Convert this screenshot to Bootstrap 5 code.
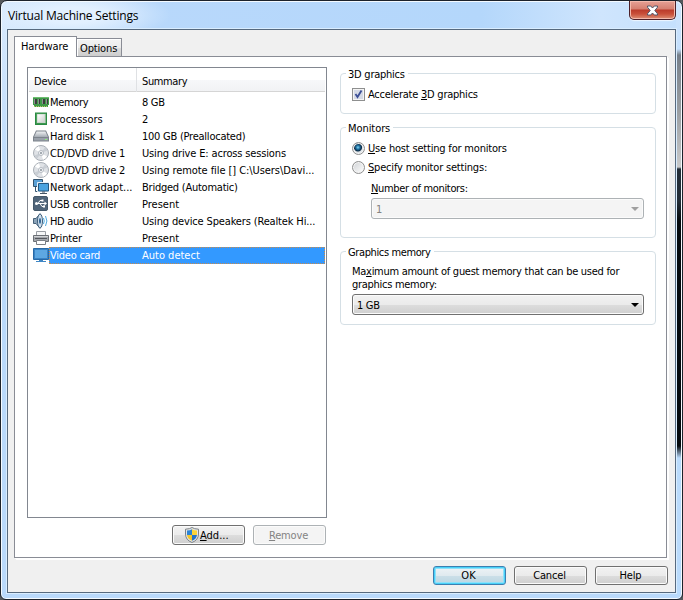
<!DOCTYPE html>
<html lang="en">
<head>
<meta charset="utf-8">
<title>Virtual Machine Settings</title>
<link href="https://cdn.jsdelivr.net/npm/bootstrap@5.3.0/dist/css/bootstrap.min.css" rel="stylesheet">
<style>
body{width:683px;height:600px;overflow:hidden;background:#55585c;font:11px/13px "DejaVu Sans Condensed","DejaVu Sans",sans-serif;font-stretch:condensed;color:#000}
u{text-underline-offset:1px;text-decoration-thickness:1px}
/* tracking steps */
.k1{letter-spacing:-.07px}.k2{letter-spacing:-.15px}.k3{letter-spacing:-.24px}.k4{letter-spacing:-.32px}.k5{letter-spacing:-.38px}
.k25{letter-spacing:-.19px}.k35{letter-spacing:-.28px}
.win{width:683px;height:600px;border:1px solid #1c222b;border-radius:7px 7px 6px 6px;box-shadow:inset 0 0 0 1px #f4faff;padding:0 6px 6px 6px;
background:linear-gradient(#cfe5fd 0,#c4dffc 48px,#77808a 54px,#9a9ea2 110px,#c8c9ca 166px,#232d37 168px,#232d37 200px,#05090d 220px,#05090d 445px,#b9dafb 457px) right 1px top 0/5px 100% no-repeat,
radial-gradient(ellipse 100px 26px at 70px 14px,#e2f0ff 30%,transparent) 0 0/200px 29px no-repeat,
linear-gradient(90deg,#d5e8fd,#b8d8fb 150px,#b4d7fb 480px,#cfe5fd 600px,#c4e0fd) 0 0/100% 29px no-repeat,
linear-gradient(#d9eafd,#b9d9fb 200px)}
.titlebar{height:28px;font:12px/16px "Open Sans","Noto Sans",sans-serif;font-stretch:normal;padding:7px 0 0 1px}
.closebtn{width:47px;height:19px;margin-top:-7px;border:1px solid #4c2029;border-top:0;border-radius:0 0 5px 5px;box-shadow:inset 0 0 0 1px #f3b9ac,0 1px 1px #eef7ff;background:linear-gradient(#e6a196,#d57f70 8px,#bb3b2b 9px,#c9503a 13px,#dd9075)}
.client{height:564px;border:1px solid #56697e;background:#f0f0f0;padding:6px 6px 0 6px;box-shadow:0 0 0 1px #d9edff}
.tabs{height:20px}
.tab1{width:63px;height:21px;border:1px solid #898c95;border-bottom:0;background:#fff;padding:3px 0 0 6px;z-index:1}
.tab2{width:45px;height:18px;border:1px solid #898c95;border-left:0;border-bottom:0;background:linear-gradient(#f3f3f3,#ebebeb 50%,#ddd 51%,#cdcdcd);padding:3px 0 0 3px;box-shadow:inset 1px 1px #fff}
.pane{width:653px;height:502px;border:1px solid #898c95;background:#fff;box-shadow:1px 1px #fff,2px 2px #fff;padding:10px 10px 0 12px}
.devlist{width:300px;height:451px;border:1px solid #828790}
.lhead{height:24px;border-bottom:1px solid #d5d5d5;background:linear-gradient(#fff 50%,#f7f8fa 51%,#f1f2f4);margin:0 1px 2px;line-height:24px;padding-top:1px}
.lhead .t{position:relative;top:1px}
.c1{width:108px;padding-left:5px;border-right:1px solid #dfe1e4;margin-top:-1px;padding-top:1px;height:24px}
.lrow{height:17px;line-height:17px;white-space:nowrap;margin-right:1px}
.lrow svg{width:16px;height:16px;margin-left:5px;flex:none}
.nm{width:86px;padding-left:1px}
.lrow .sm{padding-left:7px;flex:1}
.sel .focusbox{background:#39f;color:#fff;outline:1px dotted #c98a4a;outline-offset:-1px}
.focusbox{flex:1}
.lhead .sm{padding-left:5px}
.right{width:316px;margin-left:13px;padding-top:6px}
.grp{border:1px solid #d5dfe5;border-radius:4px;padding:0 11px;margin-bottom:13px}
.lg{width:max-content;background:#fff;padding:0 3px 0 2px;margin:-6px 0 0 -6px;height:13px;position:relative}
.g1{height:41px}.g2{height:111px}.g3{height:74px}
.gap7{margin-top:7px}.gap6{margin-top:6px}.gap3{margin-top:3px}
.indent{padding-left:19px}
.box{width:13px;height:13px;border:1px solid #8e8f8f;background:#d5dae6;box-shadow:inset 0 0 0 1px #f4f4f4;flex:none}
.rad{width:13px;height:13px;border-radius:50%;border:1px solid #8e8f8f;background:linear-gradient(135deg,#cfd2d5,#fff);box-shadow:inset 0 0 0 1px #f4f4f4;flex:none}
.rad.on{background:radial-gradient(circle at 45% 40%,#7fd4f5 0,#1b6c9c 2px,#0d2b45 3.6px,#dfe4e8 4.6px)}
.optline{height:13px;gap:3px}
.combo{height:21px;border:1px solid #707070;border-radius:3px;box-shadow:inset 0 0 0 1px #fbfbfb;background:linear-gradient(#f2f2f2,#ebebeb 50%,#ddd 51%,#cfcfcf);padding:0 4px 0 4px}
.combo.off{border-color:#adb2b5;background:#f4f4f4;color:#838383}
.combo .t{position:relative;top:1px}
.combo i{border:4px solid transparent;border-top-color:currentColor;border-bottom:0}
.combo.off i{opacity:.75}
.wbtn{width:73px;height:20px;border:1px solid #707070;border-radius:3px;box-shadow:inset 0 0 0 1px #fbfbfb;background:linear-gradient(#f2f2f2,#ebebeb 50%,#ddd 51%,#cfcfcf);padding:0 2px 0 0;font:inherit;font-size:11px;line-height:13px;color:#000}
.wbtn.off{border-color:#adb2b5;background:#f4f4f4;color:#838383}
.wbtn.def{border-color:#3c7fb1;box-shadow:inset 0 0 0 1px #48d1f8,inset 0 0 0 2px #8fe0fa;background:linear-gradient(#eef3f6,#e0eaef 50%,#cbdfe8 51%,#bcd6e2)}
.listbtns{padding:7px 1px 0 0}
.shield{gap:1px;padding-right:13px;padding-left:12px}
.dlgbtns{padding:8px 1px 0 0}
.dlgbtns .wbtn{height:19px}
</style>
<script src="https://cdn.jsdelivr.net/npm/bootstrap@5.3.0/dist/js/bootstrap.bundle.min.js"></script>
</head>
<body>
<div class="win">
 <div class="titlebar d-flex justify-content-between"><span class="t k25">Virtual Machine Settings</span>
  <div class="closebtn d-flex align-items-center justify-content-center"><svg width="13" height="11" viewBox="0 0 13 11"><path d="M1.500 1h3.200l1.800 2 1.800-2h3.200v1.200L8.800 5.500l2.700 3.300V10H8.300l-1.800-2-1.800 2H1.500V8.800L4.200 5.500 1.500 2.200z" fill="#fff" stroke="#505668"/></svg></div></div>
 <div class="client">
  <div class="tabs d-flex align-items-end"><div class="tab1 align-self-start position-relative"><span class="t k1">Hardware</span></div><div class="tab2"><span class="t k2">Options</span></div></div>
  <div class="pane d-flex align-items-start">
   <div>
   <div class="devlist">
    <div class="lhead d-flex"><div class="c1"><span class="t k3">Device</span></div><div class="sm"><span class="t k5">Summary</span></div></div>
    <div class="lrow d-flex"><svg viewBox="0 0 16 16"><path d="M0 3h16v8h-1v2H1v-2H0z" fill="#3f9a48"/><path d="M0 3h16v1H0z" fill="#6dbb70"/><path d="M1 5h3v5H1zm4 0h2v5H5zm4 0h3v5H9zm4 0h2v5h-2z" fill="#3b3f3d"/><path d="M1.500 5v5M5.500 5v5M9.500 5v5M13.500 5v5" stroke="#8c938f"/><path d="M1 12.500h14" stroke="#b9c76a" stroke-dasharray="1 1"/></svg><div class="focusbox d-flex"><div class="nm"><span class="t k4">Memory</span></div><div class="sm"><span class="t k4">8 GB</span></div></div></div>
    <div class="lrow d-flex"><svg viewBox="0 0 16 16"><linearGradient id="cp" x2="1" y2="1"><stop stop-color="#fff"/><stop offset="1" stop-color="#cdd0cf"/></linearGradient><path d="M2 1.500h12v12.500H2z" fill="#2a8a42"/><path d="M3 2.500h10v10H3z" fill="#4fa45f"/><path d="M4 3h8.500v9H4z" fill="#c9d4cb"/><path d="M4.500 3.500h7v7.500h-7z" fill="url(#cp)"/></svg><div class="focusbox d-flex"><div class="nm"><span class="t">Processors</span></div><div class="sm"><span class="t">2</span></div></div></div>
    <div class="lrow d-flex"><svg viewBox="0 0 16 16"><linearGradient id="hd" x2="0" y2="1"><stop stop-color="#f0f2f4"/><stop offset="1" stop-color="#a4abb3"/></linearGradient><path d="M3 2.500h10l3 6.500v4.500H0V9z" fill="#7c838c"/><path d="M3.600 3.500h8.800L15 9H1z" fill="url(#hd)"/><path d="M1 10h14v2.500H1z" fill="#9aa1aa"/><path d="M12 11h2v1h-2z" fill="#8ef07a"/></svg><div class="focusbox d-flex"><div class="nm"><span class="t k2">Hard disk 1</span></div><div class="sm"><span class="t k3">100 GB (Preallocated)</span></div></div></div>
    <div class="lrow d-flex"><svg viewBox="0 0 16 16"><circle cx="8" cy="8" r="7.500" fill="#dfe2e6" stroke="#a9afb6"/><path d="M8 8L2 4.500A7 7 0 0 1 6 1.300zM8 8l6 3.500a7 7 0 0 1-4 3.200z" fill="#fff"/><path d="M8 8L1.500 10.500A7 7 0 0 0 4 13.700zM8 8l6.500-2.500A7 7 0 0 0 12 2.300z" fill="#c9ced4"/><circle cx="8" cy="8" r="2.500" fill="#f4f5f7" stroke="#b5bbc2"/><circle cx="8" cy="8" r="1" fill="#89919a"/></svg><div class="focusbox d-flex"><div class="nm"><span class="t k2">CD/DVD drive 1</span></div><div class="sm"><span class="t k2">Using drive E: across sessions</span></div></div></div>
    <div class="lrow d-flex"><svg viewBox="0 0 16 16"><circle cx="8" cy="8" r="7.500" fill="#dfe2e6" stroke="#a9afb6"/><path d="M8 8L2 4.500A7 7 0 0 1 6 1.300zM8 8l6 3.500a7 7 0 0 1-4 3.200z" fill="#fff"/><path d="M8 8L1.500 10.500A7 7 0 0 0 4 13.700zM8 8l6.500-2.500A7 7 0 0 0 12 2.300z" fill="#c9ced4"/><circle cx="8" cy="8" r="2.500" fill="#f4f5f7" stroke="#b5bbc2"/><circle cx="8" cy="8" r="1" fill="#89919a"/></svg><div class="focusbox d-flex"><div class="nm"><span class="t k2">CD/DVD drive 2</span></div><div class="sm"><span class="t k1">Using remote file [] C:\Users\Davi...</span></div></div></div>
    <div class="lrow d-flex"><svg viewBox="0 0 16 16"><path d="M.5.500h9v7h-9z" fill="#5aa0d6" stroke="#34546f"/><path d="M2.500 8v4.500H5" fill="none" stroke="#34546f"/><path d="M4.500 3.500h11v9h-11z" fill="#fff" stroke="#e6f0f8"/><path d="M5.500 4.500h10v7.500h-10z" fill="#4aa3e0" stroke="#24567f"/><path d="M7 14.500h7M9 13h3" stroke="#456"/></svg><div class="focusbox d-flex"><div class="nm"><span class="t">Network adapt...</span></div><div class="sm"><span class="t k3">Bridged (Automatic)</span></div></div></div>
    <div class="lrow d-flex"><svg viewBox="0 0 16 16"><rect x=".5" y=".5" width="14" height="14" rx="1.500" fill="#50657a" stroke="#44586a"/><path d="M3 7.500h9M5 7.500L7 4.500h2M7 7.500l2 3h2" stroke="#fff" fill="none"/><circle cx="3.500" cy="7.500" r="1.500" fill="#fff"/><path d="M11.500 5.500l2.500 2-2.500 2zM8.500 3.500h2v2h-2zM10 9.500h2v2h-2z" fill="#fff"/></svg><div class="focusbox d-flex"><div class="nm"><span class="t k3">USB controller</span></div><div class="sm"><span class="t">Present</span></div></div></div>
    <div class="lrow d-flex"><svg viewBox="0 0 16 16"><path d="M.5 5.500h2.500L7 .8v14.400L3 10.500H.5z" fill="#8ba3b8" stroke="#47627a"/><ellipse cx="7" cy="8" rx="2.500" ry="7" fill="#cfe0ee" stroke="#3f5f7c"/><ellipse cx="7" cy="8" rx="1" ry="3" fill="#2b5f90"/><path d="M10.500 5q1.500 3 0 6M12.500 3q2.800 5 0 10" stroke="#4fa9de" fill="none"/></svg><div class="focusbox d-flex"><div class="nm"><span class="t k4">HD audio</span></div><div class="sm"><span class="t k2">Using device Speakers (Realtek Hi...</span></div></div></div>
    <div class="lrow d-flex"><svg viewBox="0 0 16 16"><path d="M3.500 1.500h9v4h-9z" fill="#f6f7f8" stroke="#9a9ea4"/><path d="M.5 5.500h15v6H.5z" fill="#a4a7ac" stroke="#6b6f75"/><path d="M1 6.500h14" stroke="#d2d4d7"/><path d="M2 8.500h12" stroke="#55595f"/><path d="M3.500 10.500h9v4h-9z" fill="#fff" stroke="#7c8086"/></svg><div class="focusbox d-flex"><div class="nm"><span class="t k2">Printer</span></div><div class="sm"><span class="t">Present</span></div></div></div>
    <div class="lrow d-flex sel"><svg viewBox="0 0 16 16"><path d="M.5 1.500h15v11H.5z" fill="#3a83c4" stroke="#2768a6"/><path d="M2 3h12v8H2z" fill="#5da7e2"/><path d="M6 13h4v1H6zM3 14h10v1H3z" fill="#3f86c4"/></svg><div class="focusbox d-flex"><div class="nm"><span class="t k3">Video card</span></div><div class="sm"><span class="t">Auto detect</span></div></div></div>
   </div>
   <div class="listbtns d-flex justify-content-end gap-2">
    <button class="btn wbtn shield d-flex align-items-center"><svg class="flex-shrink-0" width="14" height="16" viewBox="0 0 14 16"><path d="M7 .5Q9 2 13.500 2.200V7q0 6-6.500 8.500Q.5 13 .5 7V2.200Q5 2 7 .5z" fill="#e3e6e8" stroke="#7c8286"/><path d="M7 2.200V8H2V3.600q3 0 5-1.400z" fill="#2c84d6"/><path d="M7 2.200V8h5V3.600q-3 0-5-1.400z" fill="#fbd43a"/><path d="M2 8h5v5.800Q2.500 12 2 8z" fill="#f4c62a"/><path d="M12 8H7v5.800Q11.500 12 12 8z" fill="#2473c8"/></svg><span class="t"><u>A</u>dd...</span></button>
    <button class="btn wbtn off"><span class="t k2"><u>R</u>emove</span></button>
   </div>
   </div>
   <div class="right">
    <div class="grp g1"><div class="lg"><span class="t k3">3D graphics</span></div>
     <div class="optline d-flex gap7"><div class="box"><svg class="d-block" width="11" height="11" viewBox="0 0 11 11"><path d="M2.500 5l2 3 4-6.500" fill="none" stroke="#3c4f96" stroke-width="1.800"/></svg></div><span class="t k3">Accelerate <u>3</u>D graphics</span></div></div>
    <div class="grp g2"><div class="lg"><span class="t k1">Monitors</span></div>
     <div class="optline d-flex gap7"><div class="rad on"></div><span class="t k25"><u>U</u>se host setting for monitors</span></div>
     <div class="optline d-flex gap6"><div class="rad"></div><span class="t k25"><u>S</u>pecify monitor settings:</span></div>
     <div class="indent mt-2"><span class="t k4"><u>N</u>umber of monitors:</span></div>
     <div class="indent gap3"><div class="combo off d-flex align-items-center justify-content-between"><span class="t">1</span><i></i></div></div></div>
    <div class="grp g3"><div class="lg"><span class="t k5">Graphics memory</span></div>
     <div class="gap6"><span class="t k35">Ma<u>x</u>imum amount of guest memory that can be used for</span><br><span class="t k35">graphics memory:</span></div>
     <div class="combo gap3 d-flex align-items-center justify-content-between"><span class="t k4">1 GB</span><i></i></div></div>
   </div>
  </div>
  <div class="dlgbtns d-flex justify-content-end gap-2"><button class="btn wbtn def"><span class="t">OK</span></button><button class="btn wbtn"><span class="t k2">Cancel</span></button><button class="btn wbtn"><span class="t k2">Help</span></button></div>
 </div>
</div>
</body>
</html>
